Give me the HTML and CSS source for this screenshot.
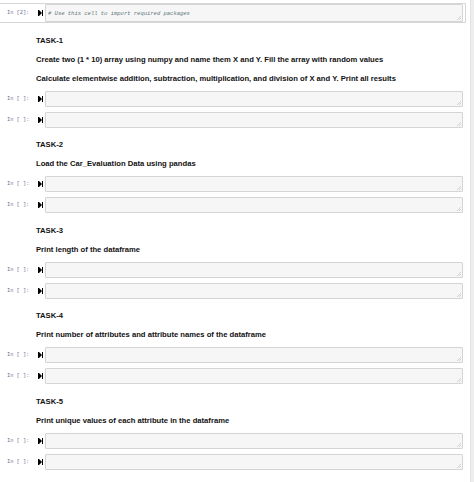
FILE: index.html
```html
<!DOCTYPE html>
<html>
<head>
<meta charset="utf-8">
<link rel="stylesheet" href="styles.css">
</head>
<body>
<div class="page">
  <div class="nb">
    <div class="cell selected">
      <div class="prompt">In [2]:</div>
      <div class="run"><svg width="5" height="6" viewBox="0 0 5 6"><rect x="0" y="0" width="1" height="6" fill="#000"/><polygon points="1,0 4,3 1,6" fill="#000"/><rect x="4" y="0" width="1" height="6" fill="#000"/></svg></div>
      <div class="input tall"><span class="comment"># Use this cell to import required packages</span><svg class="grip" width="4" height="4" viewBox="0 0 4 4"><line x1="0" y1="4" x2="4" y2="0" stroke="#c4c4c4" stroke-width="0.7"/><line x1="2" y1="4" x2="4" y2="2" stroke="#c4c4c4" stroke-width="0.7"/></svg></div>
    </div>

    <div class="md">
      <h4>TASK-1</h4>
      <p>Create two (1 * 10) array using numpy and name them X and Y. Fill the array with random values</p>
      <p>Calculate elementwise addition, subtraction, multiplication, and division of X and Y. Print all results</p>
    </div>
    <div class="cells">
      <div class="cell"><div class="prompt">In [ ]:</div><div class="run"><svg width="5" height="6" viewBox="0 0 5 6"><rect x="0" y="0" width="1" height="6" fill="#000"/><polygon points="1,0 4,3 1,6" fill="#000"/><rect x="4" y="0" width="1" height="6" fill="#000"/></svg></div><div class="input"><svg class="grip" width="4" height="4" viewBox="0 0 4 4"><line x1="0" y1="4" x2="4" y2="0" stroke="#c4c4c4" stroke-width="0.7"/><line x1="2" y1="4" x2="4" y2="2" stroke="#c4c4c4" stroke-width="0.7"/></svg></div></div>
      <div class="cell"><div class="prompt">In [ ]:</div><div class="run"><svg width="5" height="6" viewBox="0 0 5 6"><rect x="0" y="0" width="1" height="6" fill="#000"/><polygon points="1,0 4,3 1,6" fill="#000"/><rect x="4" y="0" width="1" height="6" fill="#000"/></svg></div><div class="input"><svg class="grip" width="4" height="4" viewBox="0 0 4 4"><line x1="0" y1="4" x2="4" y2="0" stroke="#c4c4c4" stroke-width="0.7"/><line x1="2" y1="4" x2="4" y2="2" stroke="#c4c4c4" stroke-width="0.7"/></svg></div></div>
    </div>

    <div class="md">
      <h4>TASK-2</h4>
      <p>Load the Car_Evaluation Data using pandas</p>
    </div>
    <div class="cells">
      <div class="cell"><div class="prompt">In [ ]:</div><div class="run"><svg width="5" height="6" viewBox="0 0 5 6"><rect x="0" y="0" width="1" height="6" fill="#000"/><polygon points="1,0 4,3 1,6" fill="#000"/><rect x="4" y="0" width="1" height="6" fill="#000"/></svg></div><div class="input"><svg class="grip" width="4" height="4" viewBox="0 0 4 4"><line x1="0" y1="4" x2="4" y2="0" stroke="#c4c4c4" stroke-width="0.7"/><line x1="2" y1="4" x2="4" y2="2" stroke="#c4c4c4" stroke-width="0.7"/></svg></div></div>
      <div class="cell"><div class="prompt">In [ ]:</div><div class="run"><svg width="5" height="6" viewBox="0 0 5 6"><rect x="0" y="0" width="1" height="6" fill="#000"/><polygon points="1,0 4,3 1,6" fill="#000"/><rect x="4" y="0" width="1" height="6" fill="#000"/></svg></div><div class="input"><svg class="grip" width="4" height="4" viewBox="0 0 4 4"><line x1="0" y1="4" x2="4" y2="0" stroke="#c4c4c4" stroke-width="0.7"/><line x1="2" y1="4" x2="4" y2="2" stroke="#c4c4c4" stroke-width="0.7"/></svg></div></div>
    </div>

    <div class="md">
      <h4>TASK-3</h4>
      <p>Print length of the dataframe</p>
    </div>
    <div class="cells">
      <div class="cell"><div class="prompt">In [ ]:</div><div class="run"><svg width="5" height="6" viewBox="0 0 5 6"><rect x="0" y="0" width="1" height="6" fill="#000"/><polygon points="1,0 4,3 1,6" fill="#000"/><rect x="4" y="0" width="1" height="6" fill="#000"/></svg></div><div class="input"><svg class="grip" width="4" height="4" viewBox="0 0 4 4"><line x1="0" y1="4" x2="4" y2="0" stroke="#c4c4c4" stroke-width="0.7"/><line x1="2" y1="4" x2="4" y2="2" stroke="#c4c4c4" stroke-width="0.7"/></svg></div></div>
      <div class="cell"><div class="prompt">In [ ]:</div><div class="run"><svg width="5" height="6" viewBox="0 0 5 6"><rect x="0" y="0" width="1" height="6" fill="#000"/><polygon points="1,0 4,3 1,6" fill="#000"/><rect x="4" y="0" width="1" height="6" fill="#000"/></svg></div><div class="input"><svg class="grip" width="4" height="4" viewBox="0 0 4 4"><line x1="0" y1="4" x2="4" y2="0" stroke="#c4c4c4" stroke-width="0.7"/><line x1="2" y1="4" x2="4" y2="2" stroke="#c4c4c4" stroke-width="0.7"/></svg></div></div>
    </div>

    <div class="md">
      <h4>TASK-4</h4>
      <p>Print number of attributes and attribute names of the dataframe</p>
    </div>
    <div class="cells">
      <div class="cell"><div class="prompt">In [ ]:</div><div class="run"><svg width="5" height="6" viewBox="0 0 5 6"><rect x="0" y="0" width="1" height="6" fill="#000"/><polygon points="1,0 4,3 1,6" fill="#000"/><rect x="4" y="0" width="1" height="6" fill="#000"/></svg></div><div class="input"><svg class="grip" width="4" height="4" viewBox="0 0 4 4"><line x1="0" y1="4" x2="4" y2="0" stroke="#c4c4c4" stroke-width="0.7"/><line x1="2" y1="4" x2="4" y2="2" stroke="#c4c4c4" stroke-width="0.7"/></svg></div></div>
      <div class="cell"><div class="prompt">In [ ]:</div><div class="run"><svg width="5" height="6" viewBox="0 0 5 6"><rect x="0" y="0" width="1" height="6" fill="#000"/><polygon points="1,0 4,3 1,6" fill="#000"/><rect x="4" y="0" width="1" height="6" fill="#000"/></svg></div><div class="input"><svg class="grip" width="4" height="4" viewBox="0 0 4 4"><line x1="0" y1="4" x2="4" y2="0" stroke="#c4c4c4" stroke-width="0.7"/><line x1="2" y1="4" x2="4" y2="2" stroke="#c4c4c4" stroke-width="0.7"/></svg></div></div>
    </div>

    <div class="md">
      <h4>TASK-5</h4>
      <p>Print unique values of each attribute in the dataframe</p>
    </div>
    <div class="cells">
      <div class="cell"><div class="prompt">In [ ]:</div><div class="run"><svg width="5" height="6" viewBox="0 0 5 6"><rect x="0" y="0" width="1" height="6" fill="#000"/><polygon points="1,0 4,3 1,6" fill="#000"/><rect x="4" y="0" width="1" height="6" fill="#000"/></svg></div><div class="input"><svg class="grip" width="4" height="4" viewBox="0 0 4 4"><line x1="0" y1="4" x2="4" y2="0" stroke="#c4c4c4" stroke-width="0.7"/><line x1="2" y1="4" x2="4" y2="2" stroke="#c4c4c4" stroke-width="0.7"/></svg></div></div>
      <div class="cell"><div class="prompt">In [ ]:</div><div class="run"><svg width="5" height="6" viewBox="0 0 5 6"><rect x="0" y="0" width="1" height="6" fill="#000"/><polygon points="1,0 4,3 1,6" fill="#000"/><rect x="4" y="0" width="1" height="6" fill="#000"/></svg></div><div class="input"><svg class="grip" width="4" height="4" viewBox="0 0 4 4"><line x1="0" y1="4" x2="4" y2="0" stroke="#c4c4c4" stroke-width="0.7"/><line x1="2" y1="4" x2="4" y2="2" stroke="#c4c4c4" stroke-width="0.7"/></svg></div></div>
    </div>
  </div>
  <div class="scrollbar"></div>
</div>
</body>
</html>
```

FILE: styles.css
```css
html, body {
  margin: 0;
  padding: 0;
  background: #ffffff;
}

.page {
  display: flex;
  width: 474px;
  height: 482px;
  overflow: hidden;
}

.nb {
  flex: 1;
  padding-top: 3px;
  font-family: "Liberation Sans", Arial, sans-serif;
}

.scrollbar {
  width: 3px;
  flex: none;
  background: #eeeeee;
  border-left: 1px solid #e2e2e2;
}

.cell {
  display: flex;
  align-items: center;
  height: 16px;
}

.cell.selected {
  height: 18px;
  width: 465px;
  border: 1px solid #d6d6d6;
  border-left: none;
}

.prompt {
  width: 31px;
  box-sizing: border-box;
  padding-left: 7px;
  font-family: "Liberation Mono", "DejaVu Sans Mono", monospace;
  font-size: 5.3px;
  color: #6a7190;
  white-space: pre;
  flex: none;
}

.run {
  flex: none;
  width: 5px;
  height: 6px;
  margin-left: 7px;
  margin-right: 2px;
  display: flex;
}

.run svg {
  display: block;
}

.input {
  position: relative;
  flex: none;
  width: 418px;
  height: 16px;
  box-sizing: border-box;
  background: #f6f6f6;
  border: 1px solid #d4d4d4;
  border-radius: 1px;
  display: flex;
  align-items: center;
  padding-left: 2px;
}

.input.tall {
  height: 18px;
}

.comment {
  font-family: "Liberation Mono", "DejaVu Sans Mono", monospace;
  font-style: italic;
  font-size: 5.5px;
  color: #62797c;
  white-space: pre;
}

.grip {
  position: absolute;
  right: 1px;
  bottom: 1px;
}

.md {
  padding-left: 36px;
  margin-top: 7.6px;
  color: #111111;
}

.md h4,
.md p {
  margin: 0;
  font-size: 7.65px;
  font-weight: bold;
  line-height: 19px;
  white-space: nowrap;
}

.cells {
  margin-top: 3px;
  display: flex;
  flex-direction: column;
  gap: 5px;
}
```
